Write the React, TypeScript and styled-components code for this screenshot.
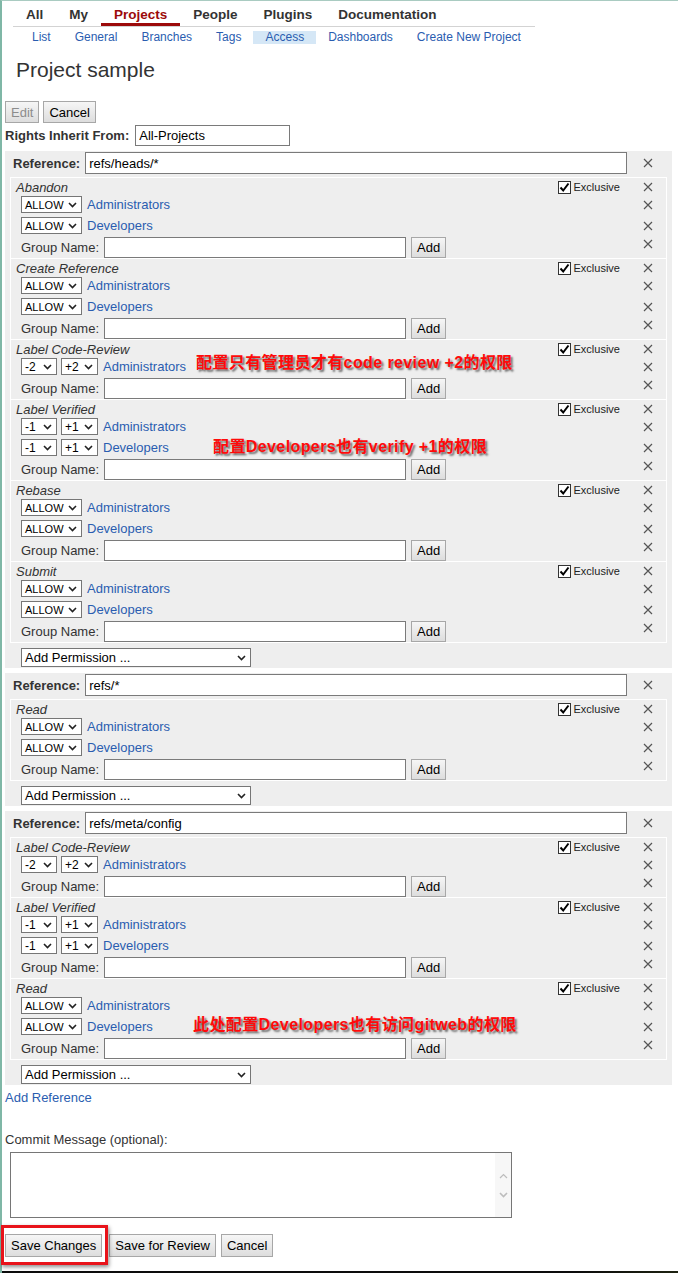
import React from 'react'
import styled, { createGlobalStyle } from 'styled-components'

const GlobalStyle = createGlobalStyle`
  html, body {
    margin: 0;
    padding: 0;
    background: #fff;
  }
  body {
    font-family: "Liberation Sans", Arial, sans-serif;
    font-size: 13px;
    color: #222;
  }
`

type Rule = { group: string; range?: [string, string] }
type Permission = { name: string; rules: Rule[] }
type RefSection = { ref: string; perms: Permission[] }

const both: Rule[] = [{ group: 'Administrators' }, { group: 'Developers' }]

const SECTIONS: RefSection[] = [
  {
    ref: 'refs/heads/*',
    perms: [
      { name: 'Abandon', rules: both },
      { name: 'Create Reference', rules: both },
      { name: 'Label Code-Review', rules: [{ group: 'Administrators', range: ['-2', '+2'] }] },
      {
        name: 'Label Verified',
        rules: [
          { group: 'Administrators', range: ['-1', '+1'] },
          { group: 'Developers', range: ['-1', '+1'] },
        ],
      },
      { name: 'Rebase', rules: both },
      { name: 'Submit', rules: both },
    ],
  },
  {
    ref: 'refs/*',
    perms: [{ name: 'Read', rules: both }],
  },
  {
    ref: 'refs/meta/config',
    perms: [
      { name: 'Label Code-Review', rules: [{ group: 'Administrators', range: ['-2', '+2'] }] },
      {
        name: 'Label Verified',
        rules: [
          { group: 'Administrators', range: ['-1', '+1'] },
          { group: 'Developers', range: ['-1', '+1'] },
        ],
      },
      { name: 'Read', rules: both },
    ],
  },
]

const Root = styled.div`
  position: relative;
  height: 1273px;
  box-sizing: border-box;
  border-left: 2px solid #7fb7a6;
  border-top: 1px solid #a9cbc1;
  display: flex;
  flex-direction: column;
  background: #fff;
`

const Main = styled.div`
  flex: 1;
  padding-left: 3px;
`

const ScreenEdge = styled.div`
  height: 2px;
  background: linear-gradient(90deg, #0c0c0c 0%, #0c0c0c 85%, #1d2210 100%);
`

const TopNav = styled.nav`
  display: flex;
  width: 522px;
  margin-left: 8px;
  border-bottom: 1px solid #d3d3d3;
`

const TopTab = styled.a<{ $active?: boolean }>`
  padding: 6px 13px 0;
  line-height: 16px;
  font-size: 13.5px;
  font-weight: bold;
  text-decoration: none;
  color: ${(p) => (p.$active ? '#9c0a0a' : '#333')};
  border-bottom: 3px solid ${(p) => (p.$active ? '#9c0a0a' : 'transparent')};
`

const SubNav = styled.div`
  display: flex;
  margin-left: 15px;
  padding-top: 4px;
`

const SubTab = styled.a<{ $active?: boolean }>`
  padding: 0 12px;
  height: 13px;
  line-height: 13px;
  font-size: 12px;
  color: #2a5db0;
  text-decoration: none;
  background: ${(p) => (p.$active ? '#d5e7f6' : 'transparent')};
`

const Title = styled.h1`
  margin: 14px 0 0 11px;
  font-size: 21px;
  line-height: 24px;
  font-weight: normal;
  color: #333;
`

const Toolbar = styled.div`
  display: flex;
  gap: 4px;
  margin-top: 19px;
`

const Button = styled.button<{ $h?: number }>`
  box-sizing: border-box;
  height: ${(p) => p.$h ?? 22}px;
  padding: 0 5px;
  font-family: "Liberation Sans", Arial, sans-serif;
  font-size: 13px;
  color: #000;
  background: linear-gradient(#f6f6f6, #dddddd);
  border: 1px solid #a7a7a7;
  border-radius: 0;

  &:disabled {
    color: #8c8c8c;
  }
`

const InheritRow = styled.div`
  display: flex;
  align-items: center;
  gap: 6px;
  margin-top: 2px;
`

const BoldLabel = styled.span`
  font-weight: bold;
  color: #333;
`

const TextInput = styled.input<{ $w: number; $h?: number }>`
  box-sizing: border-box;
  width: ${(p) => p.$w}px;
  height: ${(p) => p.$h ?? 21}px;
  padding: 0 3px;
  border: 1px solid #7a7a7a;
  background: #fff;
  font-family: "Liberation Sans", Arial, sans-serif;
  font-size: 13px;
  color: #000;
  outline: none;
`

const Sections = styled.div`
  display: flex;
  flex-direction: column;
  gap: 5px;
  margin-top: 5px;
`

const Section = styled.section`
  width: 667px;
  box-sizing: border-box;
  padding: 1px 5px 1px;
  background: #eee;
`

const RefRow = styled.div`
  display: grid;
  grid-template-columns: 1fr 24px;
  align-items: center;
  height: 22px;
  padding: 0 14px 0 3px;
`

const RefField = styled.div`
  display: flex;
  align-items: center;
  gap: 5px;
`

const BlockList = styled.div`
  margin-top: 3px;
  border-bottom: 1px solid #fff;
`

const PermBlock = styled.div`
  border: 1px solid #fff;
  border-bottom: none;
  padding: 0 13px 0 5px;
`

const PermRow = styled.div<{ $h: number }>`
  display: grid;
  grid-template-columns: 1fr 24px;
  align-items: center;
  height: ${(p) => p.$h}px;
`

const RowBody = styled.div<{ $indent?: number }>`
  display: flex;
  align-items: center;
  padding-left: ${(p) => p.$indent ?? 0}px;
`

const PermTitle = styled.span`
  font-style: italic;
  line-height: 16px;
  margin-top: 2px;
  color: #333;
`

const Exclusive = styled.label`
  display: flex;
  align-items: center;
  gap: 3px;
  margin-left: auto;
  margin-right: 9px;
  font-size: 11px;
  color: #222;
`

const CheckBox = styled.span`
  box-sizing: border-box;
  width: 13px;
  height: 13px;
  border: 1px solid #333;
  background: #fff;
  display: flex;
  align-items: center;
  justify-content: center;
`

const SelectBox = styled.span<{ $w: number; $h?: number; $size?: number }>`
  box-sizing: border-box;
  display: inline-flex;
  align-items: center;
  justify-content: space-between;
  width: ${(p) => p.$w}px;
  height: ${(p) => p.$h ?? 17}px;
  padding: 0 4px 0 3px;
  border: 1px solid #767676;
  background: #fff;
  font-size: ${(p) => p.$size ?? 11}px;
  color: #000;
  flex-shrink: 0;
`

const SelectGroup = styled.span`
  display: flex;
  gap: 4px;
  margin-right: 5px;
`

const GroupLink = styled.a`
  color: #2a5db0;
  text-decoration: none;
  line-height: 16px;
`

const FieldLabel = styled.span`
  color: #333;
  margin-right: 5px;
`

const AddWrap = styled.span`
  margin-left: 5px;
`

const RemoveCell = styled.span<{ $top?: boolean }>`
  justify-self: end;
  align-self: ${(p) => (p.$top ? 'start' : 'center')};
  margin-top: ${(p) => (p.$top ? 3 : 0)}px;
  display: flex;
`

const AddPermission = styled.div`
  margin: 5px 0 0 11px;
`

const AddReference = styled.a`
  display: block;
  margin-top: 5px;
  line-height: 15px;
  color: #2a5db0;
  text-decoration: none;
`

const CommitLabel = styled.div`
  margin-top: 27px;
  line-height: 15px;
  color: #333;
`

const CommitBox = styled.div`
  display: flex;
  box-sizing: border-box;
  width: 502px;
  height: 66px;
  margin: 5px 0 0 5px;
  border: 1px solid #767676;
  background: #fff;
`

const CommitText = styled.textarea`
  flex: 1;
  border: none;
  resize: none;
  outline: none;
  font-family: "Liberation Sans", Arial, sans-serif;
  font-size: 13px;
`

const ScrollTrack = styled.div`
  width: 16px;
  background: #f7f7f7;
  display: flex;
  flex-direction: column;
  align-items: center;
  justify-content: center;
  gap: 13px;
`

const Actions = styled.div`
  display: flex;
  gap: 5px;
  margin-top: 16px;
`

const Highlighted = styled.span`
  position: relative;
  display: flex;
  margin-right: 2px;
`

const HighlightRing = styled.span`
  position: absolute;
  top: -9px;
  right: -6px;
  bottom: -8px;
  left: -4px;
  border: 3px solid #e8131a;
  box-shadow: 1px 2px 4px rgba(0, 0, 0, 0.45);
  pointer-events: none;
`

const Annotation = styled.div<{ $x: number; $y: number }>`
  position: absolute;
  left: ${(p) => p.$x - 2}px;
  top: ${(p) => p.$y - 1}px;
  font-family: "Liberation Sans", "Noto Sans CJK SC", sans-serif;
  font-size: 16px;
  font-weight: bold;
  line-height: 20px;
  letter-spacing: 0.4px;
  color: #ff0a0a;
  text-shadow: 2px 2px 2px rgba(0, 0, 0, 0.55);
  white-space: nowrap;
`

const Chevron = ({ up = false, color = '#222', w = 9 }: { up?: boolean; color?: string; w?: number }) => (
  <svg width={w} height={6} viewBox="0 0 9 6">
    <path
      d={up ? 'M1 5 L4.5 1.5 L8 5' : 'M1 1 L4.5 4.5 L8 1'}
      fill="none"
      stroke={color}
      strokeWidth={up ? 1.2 : 1.6}
    />
  </svg>
)

const RemoveIcon = () => (
  <svg width={10} height={10} viewBox="0 0 10 10">
    <path d="M1 1 L9 9 M9 1 L1 9" stroke="#555" strokeWidth={1.2} />
  </svg>
)

const Select = ({ value, w, h, size }: { value: string; w: number; h?: number; size?: number }) => (
  <SelectBox $w={w} $h={h} $size={size}>
    {value}
    <Chevron />
  </SelectBox>
)

const PermissionBlock = ({ perm }: { perm: Permission }) => (
  <PermBlock>
    <PermRow $h={16}>
      <RowBody>
        <PermTitle>{perm.name}</PermTitle>
        <Exclusive>
          <CheckBox>
            <svg width={11} height={11} viewBox="0 0 11 11">
              <path d="M1.5 5.5 L4.2 8.5 L9.5 1.5" fill="none" stroke="#000" strokeWidth={2} />
            </svg>
          </CheckBox>
          Exclusive
        </Exclusive>
      </RowBody>
      <RemoveCell>
        <RemoveIcon />
      </RemoveCell>
    </PermRow>
    {perm.rules.map((rule) => (
      <PermRow $h={21} key={rule.group}>
        <RowBody $indent={5}>
          <SelectGroup>
            {rule.range ? (
              <>
                <Select value={rule.range[0]} w={36} size={12} />
                <Select value={rule.range[1]} w={37} size={12} />
              </>
            ) : (
              <Select value="ALLOW" w={61} />
            )}
          </SelectGroup>
          <GroupLink href="#">{rule.group}</GroupLink>
        </RowBody>
        <RemoveCell>
          <RemoveIcon />
        </RemoveCell>
      </PermRow>
    ))}
    <PermRow $h={22}>
      <RowBody $indent={5}>
        <FieldLabel>Group Name:</FieldLabel>
        <TextInput $w={302} />
        <AddWrap>
          <Button $h={21}>Add</Button>
        </AddWrap>
      </RowBody>
      <RemoveCell $top>
        <RemoveIcon />
      </RemoveCell>
    </PermRow>
  </PermBlock>
)

const ReferenceSection = ({ section }: { section: RefSection }) => (
  <Section>
    <RefRow>
      <RefField>
        <BoldLabel>Reference:</BoldLabel>
        <TextInput $w={542} $h={22} defaultValue={section.ref} />
      </RefField>
      <RemoveCell>
        <RemoveIcon />
      </RemoveCell>
    </RefRow>
    <BlockList>
      {section.perms.map((perm) => (
        <PermissionBlock perm={perm} key={perm.name} />
      ))}
    </BlockList>
    <AddPermission>
      <Select value="Add Permission ..." w={230} h={19} size={13} />
    </AddPermission>
  </Section>
)

export default function App() {
  return (
    <Root>
      <GlobalStyle />
      <Main>
        <TopNav>
          <TopTab>All</TopTab>
          <TopTab>My</TopTab>
          <TopTab $active>Projects</TopTab>
          <TopTab>People</TopTab>
          <TopTab>Plugins</TopTab>
          <TopTab>Documentation</TopTab>
        </TopNav>
        <SubNav>
          <SubTab href="#">List</SubTab>
          <SubTab href="#">General</SubTab>
          <SubTab href="#">Branches</SubTab>
          <SubTab href="#">Tags</SubTab>
          <SubTab href="#" $active>Access</SubTab>
          <SubTab href="#">Dashboards</SubTab>
          <SubTab href="#">Create New Project</SubTab>
        </SubNav>
        <Title>Project sample</Title>
        <Toolbar>
          <Button disabled>Edit</Button>
          <Button>Cancel</Button>
        </Toolbar>
        <InheritRow>
          <BoldLabel>Rights Inherit From:</BoldLabel>
          <TextInput $w={155} defaultValue="All-Projects" />
        </InheritRow>
        <Sections>
          {SECTIONS.map((s) => (
            <ReferenceSection section={s} key={s.ref} />
          ))}
        </Sections>
        <AddReference href="#">Add Reference</AddReference>
        <CommitLabel>Commit Message (optional):</CommitLabel>
        <CommitBox>
          <CommitText />
          <ScrollTrack>
            <Chevron up color="#bdbdbd" w={11} />
            <Chevron color="#bdbdbd" w={11} />
          </ScrollTrack>
        </CommitBox>
        <Actions>
          <Highlighted>
            <Button $h={23}>Save Changes</Button>
            <HighlightRing />
          </Highlighted>
          <Button $h={23}>Save for Review</Button>
          <Button $h={23}>Cancel</Button>
        </Actions>
      </Main>
      <ScreenEdge />
      <Annotation $x={196} $y={353}>配置只有管理员才有code review +2的权限</Annotation>
      <Annotation $x={213} $y={437}>配置Developers也有verify +1的权限</Annotation>
      <Annotation $x={193} $y={1015}>此处配置Developers也有访问gitweb的权限</Annotation>
    </Root>
  )
}
